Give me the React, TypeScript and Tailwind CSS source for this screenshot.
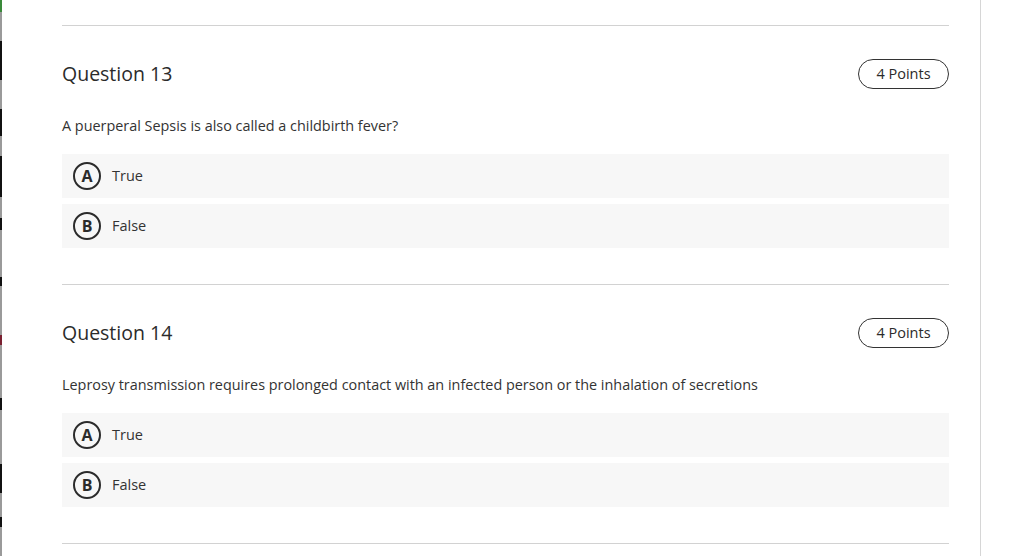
import React from 'react';

interface Question {
  num: number;
  points: number;
  text: string;
  options: { key: string; label: string }[];
}

const questions: Question[] = [
  {
    num: 13,
    points: 4,
    text: 'A puerperal Sepsis is also called a childbirth fever?',
    options: [
      { key: 'A', label: 'True' },
      { key: 'B', label: 'False' },
    ],
  },
  {
    num: 14,
    points: 4,
    text: 'Leprosy transmission requires prolonged contact with an infected person or the inhalation of secretions',
    options: [
      { key: 'A', label: 'True' },
      { key: 'B', label: 'False' },
    ],
  },
];

// leftover strip of the window behind, on the left edge
const edge = [
  'h-[12px] bg-[#3a8a3a]',
  'h-[30px] bg-[#9a9a9a]',
  'h-[40px] bg-[#111]',
  'h-[30px] bg-[#9a9a9a]',
  'h-[28px] bg-[#111]',
  'h-[20px] bg-[#9a9a9a]',
  'h-[42px] bg-[#111]',
  'h-[22px] bg-[#9a9a9a]',
  'h-[12px] bg-[#111]',
  'h-[48px] bg-[#9a9a9a]',
  'h-[10px] bg-[#111]',
  'h-[50px] bg-[#9a9a9a]',
  'h-[10px] bg-[#7a2030]',
  'h-[55px] bg-[#9a9a9a]',
  'h-[12px] bg-[#111]',
  'h-[55px] bg-[#9a9a9a]',
  'h-[30px] bg-[#111]',
  'h-[25px] bg-[#9a9a9a]',
  'h-[10px] bg-[#111]',
  'h-[30px] bg-[#9a9a9a]',
];

const App: React.FC = () => {
  return (
    <div
      className="flex h-[556px] w-[1024px] overflow-hidden bg-white text-[#333]"
      style={{ fontFamily: '"Open Sans", "Noto Sans", sans-serif' }}
    >
      <div className="flex w-[2px] shrink-0 flex-col">
        {edge.map((c, i) => (
          <div key={i} className={c} />
        ))}
      </div>
      <div className="w-[979px] shrink-0 border-r border-[#d6d6d6] pl-[60px] pr-[31px] pt-[25px]">
        {questions.map((q) => (
          <section key={q.num} className="border-t border-[#d2d2d2] pb-[36px] pt-[33px]">
            <div className="flex h-[30px] items-center justify-between">
              <h2 className="text-[19.5px] font-medium leading-none text-[#2b2b2b]">Question {q.num}</h2>
              <span className="flex h-[30px] w-[91px] items-center justify-center rounded-full border border-[#333] text-[14.5px] font-medium text-[#2b2b2b]">
                {q.points} Points
              </span>
            </div>
            <p className="mt-[27px] text-[14.4px] leading-[20px] text-[#333]">{q.text}</p>
            <div className="mt-[18px] flex flex-col gap-[6px]">
              {q.options.map((o) => (
                <div key={o.key} className="flex h-[44px] items-center bg-[#f7f7f7] pl-[11px]">
                  <span className="flex h-[28px] w-[28px] items-center justify-center rounded-full border-2 border-[#2b2b2b] text-[16px] font-bold leading-none text-[#2b2b2b]">
                    {o.key}
                  </span>
                  <span className="ml-[11px] text-[14.5px] font-medium text-[#333]">{o.label}</span>
                </div>
              ))}
            </div>
          </section>
        ))}
        <div className="border-t border-[#d2d2d2]" />
      </div>
    </div>
  );
};

export default App;
